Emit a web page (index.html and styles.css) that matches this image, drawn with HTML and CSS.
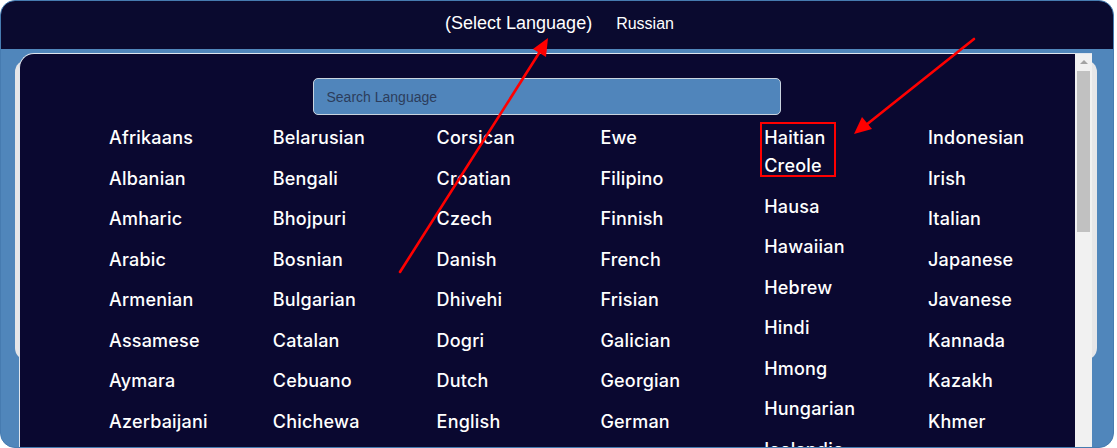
FILE: index.html
```html
<!DOCTYPE html>
<html lang="en">
<head>
<meta charset="utf-8">
<title>Select Language</title>
<link rel="stylesheet" href="styles.css">
</head>
<body>
<div class="frame">
  <header class="topbar">
    <span class="select-label">(Select Language)</span>
    <span class="current">Russian</span>
  </header>
  <main class="stage">
    <div class="backdrop"></div>
    <section class="modal">
      <div class="modal-content">
        <div class="search-row">
          <input class="search" type="text" placeholder="Search Language">
        </div>
        <div class="lang-grid">
          <ul class="col">
            <li>Afrikaans</li><li>Albanian</li><li>Amharic</li><li>Arabic</li><li>Armenian</li><li>Assamese</li><li>Aymara</li><li>Azerbaijani</li>
          </ul>
          <ul class="col">
            <li>Belarusian</li><li>Bengali</li><li>Bhojpuri</li><li>Bosnian</li><li>Bulgarian</li><li>Catalan</li><li>Cebuano</li><li>Chichewa</li>
          </ul>
          <ul class="col">
            <li>Corsican</li><li>Croatian</li><li>Czech</li><li>Danish</li><li>Dhivehi</li><li>Dogri</li><li>Dutch</li><li>English</li>
          </ul>
          <ul class="col">
            <li>Ewe</li><li>Filipino</li><li>Finnish</li><li>French</li><li>Frisian</li><li>Galician</li><li>Georgian</li><li>German</li>
          </ul>
          <ul class="col">
            <li>Haitian Creole</li><li>Hausa</li><li>Hawaiian</li><li>Hebrew</li><li>Hindi</li><li>Hmong</li><li>Hungarian</li><li>Icelandic</li>
          </ul>
          <ul class="col">
            <li>Indonesian</li><li>Irish</li><li>Italian</li><li>Japanese</li><li>Javanese</li><li>Kannada</li><li>Kazakh</li><li>Khmer</li>
          </ul>
        </div>
      </div>
      <div class="scrollbar">
        <div class="sb-arrow"></div>
        <div class="sb-thumb"></div>
      </div>
    </section>
  </main>
  <svg class="annotations" width="1117" height="448" viewBox="0 0 1117 448">
    <line x1="400" y1="272" x2="541" y2="50" stroke="#ff0000" stroke-width="2.6" stroke-linecap="round"/>
    <polygon points="548,38 546,57 533,49" fill="#ff0000"/>
    <line x1="974" y1="39" x2="866" y2="125" stroke="#ff0000" stroke-width="2.6" stroke-linecap="round"/>
    <polygon points="854,134 862,117 872,129" fill="#ff0000"/>
    <rect x="761" y="123" width="74" height="53" fill="none" stroke="#ff0000" stroke-width="2"/>
  </svg>
</div>
</body>
</html>
```
FILE: styles.css
```css
html, body {
  margin: 0;
  padding: 0;
  height: 448px;
  overflow: hidden;
  background: #ffffff;
}

body {
  font-family: "Liberation Sans", Arial, sans-serif;
}

.frame {
  position: relative;
  width: 1114px;
  height: 448px;
  box-sizing: border-box;
  border: 1px solid #467bb0;
  border-radius: 15px;
  background: #5086bb;
  overflow: hidden;
  display: flex;
  flex-direction: column;
}

.topbar {
  height: 48px;
  flex: none;
  background: #0a0a2f;
  border-radius: 14px 14px 0 0;
  display: flex;
  align-items: center;
  justify-content: center;
  gap: 24px;
  padding-left: 5px;
  color: #ffffff;
  padding-bottom: 3px;
  box-sizing: border-box;
}

.select-label {
  font-size: 18px;
}

.current {
  font-size: 16px;
}

.stage {
  flex: 1;
  display: grid;
  grid-template-columns: 1fr;
  grid-template-rows: 1fr;
  min-height: 0;
}

.backdrop {
  grid-area: 1 / 1;
  margin: 11px 0 0 14px;
  width: 1082px;
  height: 300px;
  background: #e6e6e8;
  border-radius: 12px;
}

.modal {
  grid-area: 1 / 1;
  margin: 4px 0 0 18px;
  width: 1073px;
  height: 420px;
  box-sizing: border-box;
  background: #0a0830;
  border-top: 1px solid #dfe6ef;
  border-left: 1px solid #dfe6ef;
  border-radius: 15px 0 0 0;
  display: flex;
}

.modal-content {
  flex: 1;
  min-width: 0;
  padding-top: 24px;
}

.search-row {
  display: flex;
  justify-content: center;
  padding-right: 2px;
}

.search {
  width: 468px;
  height: 37px;
  box-sizing: border-box;
  background: #5085bb;
  border: 1px solid #c9d3de;
  border-radius: 5px;
  padding: 0 13px;
  font-family: "Liberation Sans", Arial, sans-serif;
  font-size: 14px;
  color: #1e2b44;
  outline: none;
}

.search::placeholder {
  color: #2c3d5c;
}

.lang-grid {
  display: flex;
  padding-left: 89px;
  margin-top: 9px;
}

.col {
  list-style: none;
  margin: 0;
  padding: 0;
  width: 163.8px;
  flex: none;
}

.col li {
  width: 112px;
  font-family: "Inter", "Noto Sans", sans-serif;
  font-size: 18px;
  font-weight: 500;
  letter-spacing: 0.2px;
  line-height: 28.2px;
  margin-bottom: 12.3px;
  color: #ffffff;
}

.scrollbar {
  width: 17px;
  flex: none;
  background: #f1f1f1;
  display: flex;
  flex-direction: column;
  align-items: center;
}

.sb-arrow {
  margin-top: 6px;
  width: 0;
  height: 0;
  border-left: 4px solid transparent;
  border-right: 4px solid transparent;
  border-bottom: 4px solid #a3a3a3;
}

.sb-thumb {
  margin-top: 7px;
  width: 13px;
  height: 161px;
  background: #c1c1c1;
}

.annotations {
  position: absolute;
  left: -1px;
  top: -1px;
  pointer-events: none;
}
```
